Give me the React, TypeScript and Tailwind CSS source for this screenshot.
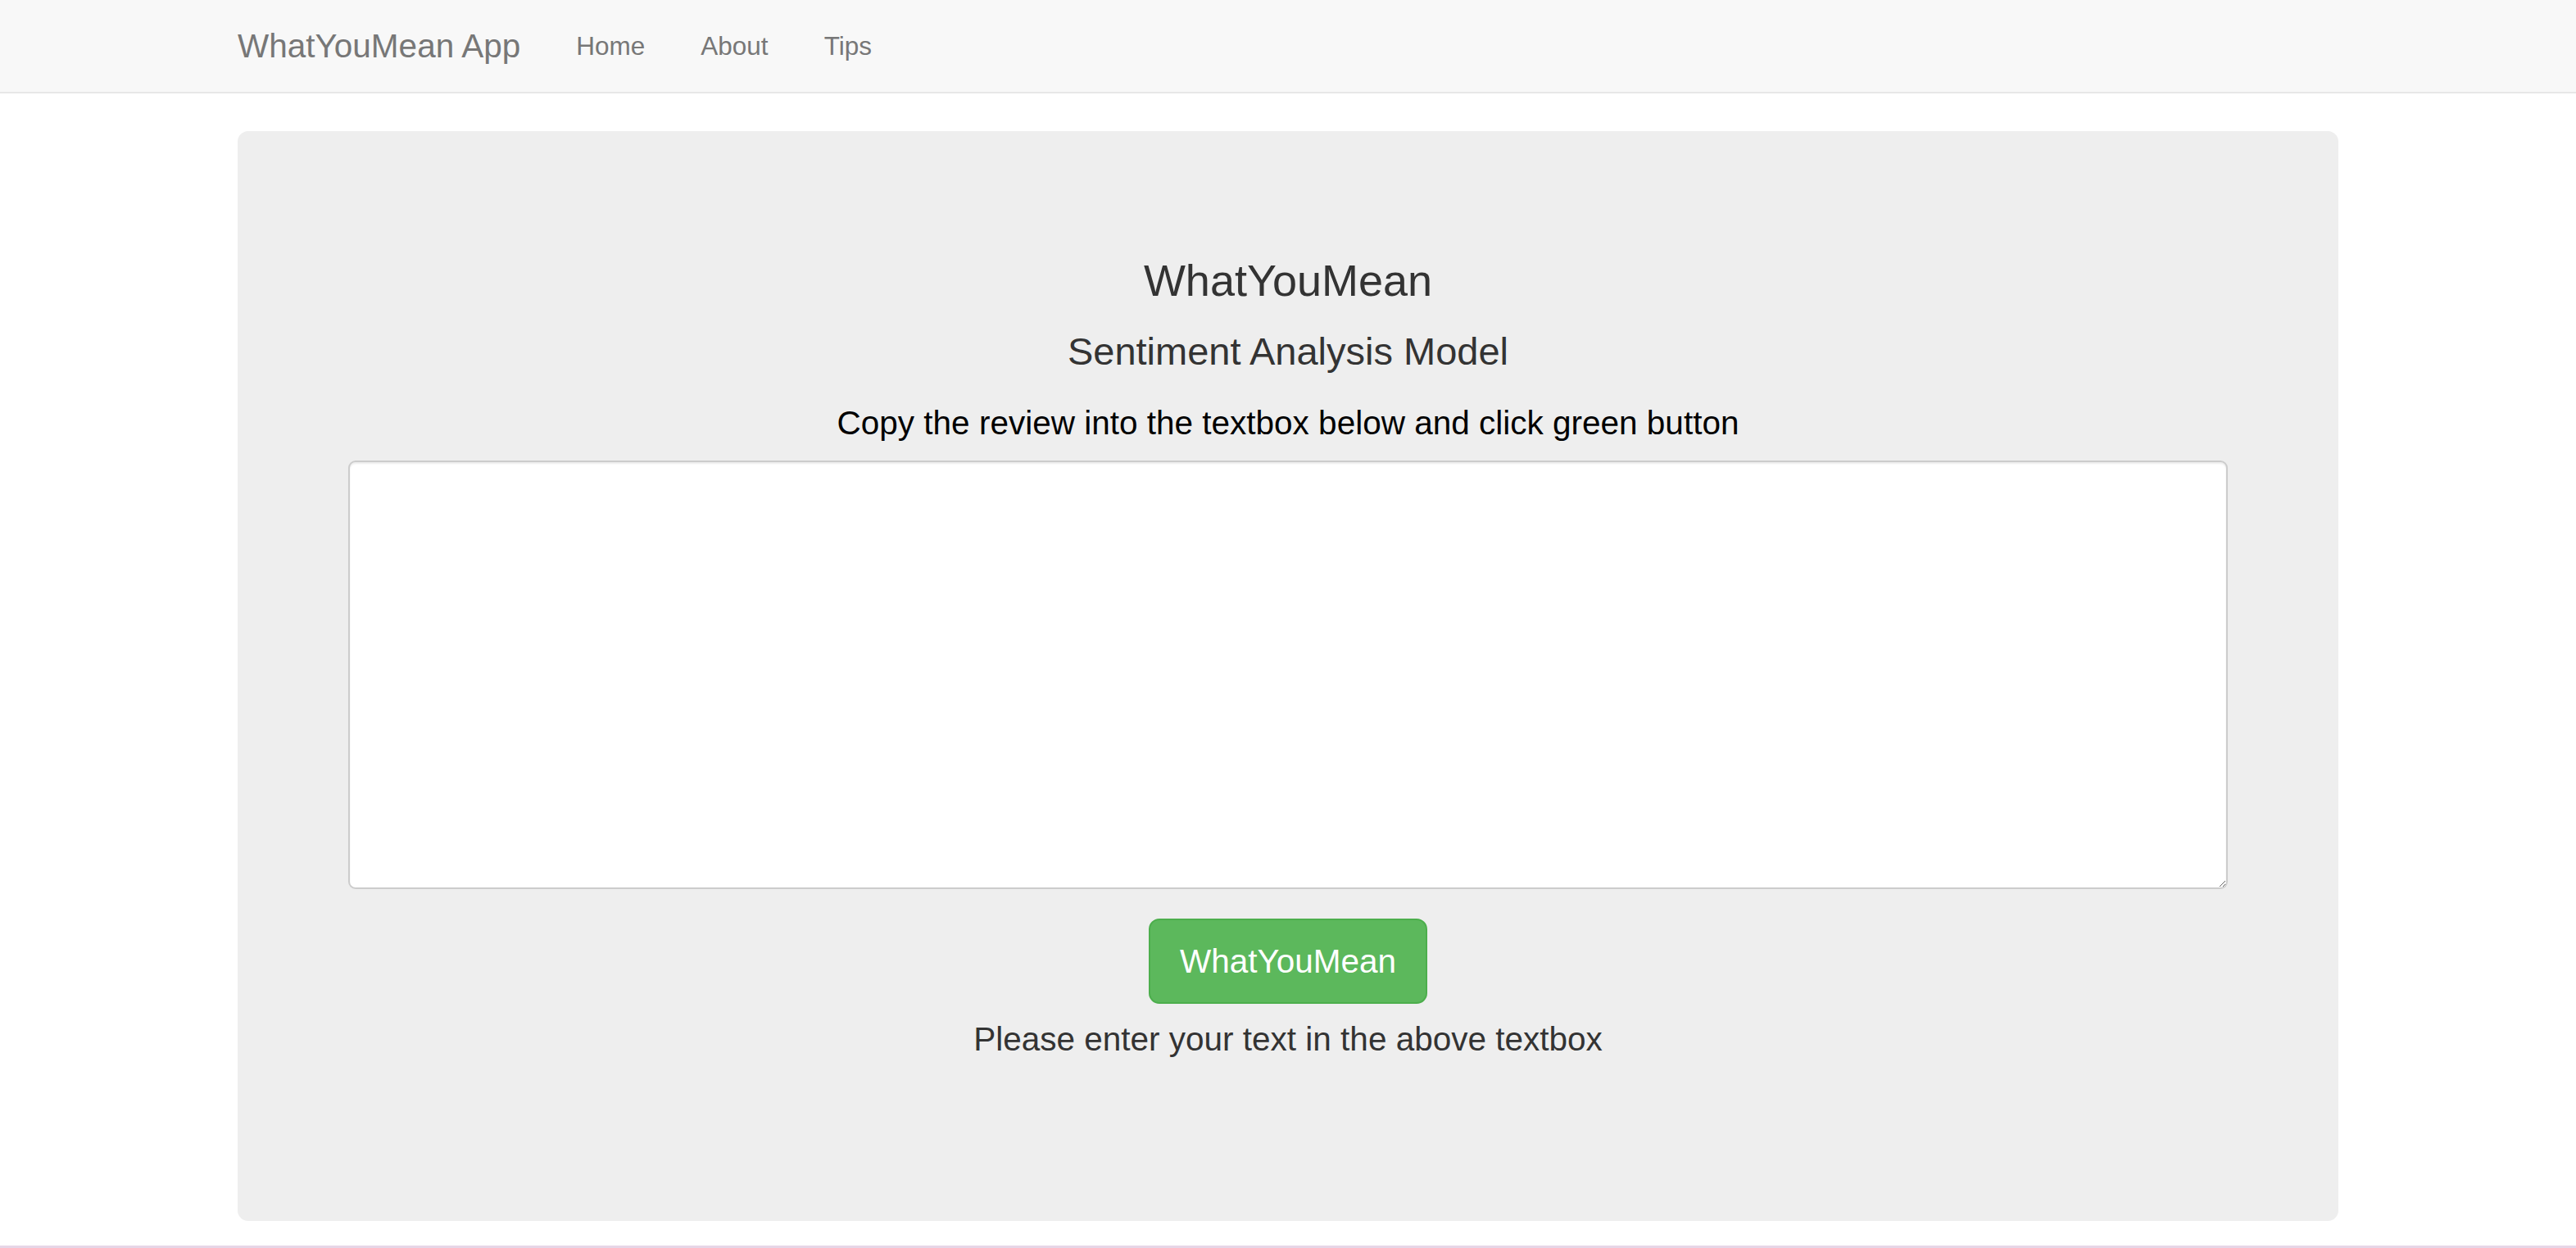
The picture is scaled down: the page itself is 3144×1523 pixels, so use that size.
import React from "react";

const font = { fontFamily: '"Liberation Sans", Arial, sans-serif' };

export default function App() {
  return (
    <div
      style={font}
      className="h-[1523px] w-full flex flex-col overflow-hidden bg-white"
    >
      {/* top navbar */}
      <nav className="h-[114px] shrink-0 bg-[#f8f8f8] border-b-2 border-[#e7e7e7]">
        <div className="w-[2564px] mx-auto flex items-start pt-[34px]">
          <a className="text-[40.5px] leading-[45px] text-[#777] pr-[34px] cursor-pointer">
            WhatYouMean App
          </a>
          <ul className="flex">
            <li className="px-[34px] text-[31.5px] leading-[45px] text-[#777]">Home</li>
            <li className="px-[34px] text-[31.5px] leading-[45px] text-[#777]">About</li>
            <li className="px-[34px] text-[31.5px] leading-[45px] text-[#777]">Tips</li>
          </ul>
        </div>
      </nav>

      <main className="flex-1">
        {/* jumbotron */}
        <div className="w-[2564px] h-[1330px] mx-auto mt-[46px] bg-[#eee] rounded-[13px] px-[135px] pt-[152px] flex flex-col items-center">
          <h3 className="text-[54px] leading-[60px] text-[#333]">WhatYouMean</h3>
          <p className="mt-[23px] text-[47px] leading-[68px] text-[#333]">
            Sentiment Analysis Model
          </p>
          <label className="mt-[31px] text-[40.5px] leading-[45px] text-black">
            Copy the review into the textbox below and click green button
          </label>
          <textarea
            className="mt-[23px] w-full h-[523px] shrink-0 bg-white border-2 border-[#ccc] rounded-[9px] shadow-[inset_0_2px_2px_rgba(0,0,0,0.075)] px-[27px] py-[14px] text-[31.5px] text-[#555] outline-none"
          />
          <button className="mt-[36px] h-[104px] px-[36px] bg-[#5cb85c] border-2 border-[#4cae4c] rounded-[13px] text-white text-[40.5px] leading-[54px]">
            WhatYouMean
          </button>
          <p className="mt-[21px] text-[40.5px] leading-[45px] text-[#333]">
            Please enter your text in the above textbox
          </p>
        </div>
      </main>

      <div className="h-[3px] shrink-0 bg-[#e6d6e7]" />
    </div>
  );
}
